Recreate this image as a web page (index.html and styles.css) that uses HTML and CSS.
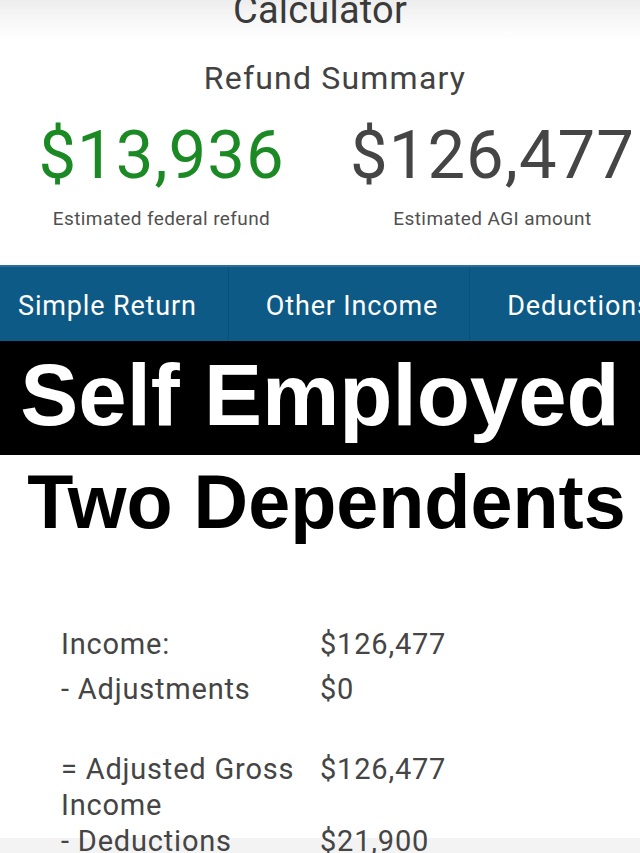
FILE: index.html
```html
<!DOCTYPE html>
<html lang="en">
<head>
<meta charset="utf-8">
<title>Refund Summary</title>
<link rel="stylesheet" href="styles.css">
</head>
<body>
<div class="page">
  <header class="summary">
    <h1 class="app-title">Calculator</h1>
    <h2 class="summary-title">Refund Summary</h2>
    <div class="figures">
      <div class="figure">
        <div class="amount amount-refund">$13,936</div>
        <div class="figure-label">Estimated federal refund</div>
      </div>
      <div class="figure">
        <div class="amount">$126,477</div>
        <div class="figure-label">Estimated AGI amount</div>
      </div>
    </div>
  </header>

  <nav class="tabs">
    <div class="tab tab-first">Simple Return</div>
    <div class="tab">Other Income</div>
    <div class="tab">Deductions</div>
  </nav>

  <div class="banner">Self Employed</div>
  <div class="subhead">Two Dependents</div>

  <section class="breakdown">
    <div class="row">
      <div class="row-label">Income:</div>
      <div class="row-value">$126,477</div>
    </div>
    <div class="row row-tight">
      <div class="row-label">- Adjustments</div>
      <div class="row-value">$0</div>
    </div>
    <div class="row row-section">
      <div class="row-label">= Adjusted Gross Income</div>
      <div class="row-value">$126,477</div>
    </div>
    <div class="row">
      <div class="row-label">- Deductions</div>
      <div class="row-value">$21,900</div>
    </div>
  </section>
</div>
</body>
</html>
```

FILE: styles.css
```css
html, body {
  margin: 0;
  padding: 0;
}

body {
  width: 640px;
  height: 853px;
  overflow: hidden;
  font-family: Roboto, "Noto Sans", "Liberation Sans", sans-serif;
  color: #454545;
  background:
    linear-gradient(to bottom, #ededed 0, #f8f8f8 22px, #ffffff 40px, #ffffff 838px, #f3f3f3 838px, #f3f3f3 853px);
}

.page {
  width: 640px;
  overflow: hidden;
}

.summary {
  text-align: center;
}

.app-title {
  margin: -10px 0 0;
  font-size: 38px;
  line-height: 40px;
  font-weight: 400;
  letter-spacing: 0.2px;
  color: #3a3a3a;
}

.summary-title {
  margin: 28px 0 0;
  padding-left: 30px;
  font-size: 32px;
  line-height: 40px;
  font-weight: 400;
  letter-spacing: 1.2px;
  color: #424242;
}

.figures {
  display: grid;
  grid-template-columns: 323px 339px;
  margin-top: 22px;
  width: 662px;
}

.figure {
  text-align: center;
}

.amount {
  font-size: 67px;
  line-height: 70px;
  letter-spacing: 1px;
  color: #454545;
  white-space: nowrap;
}

.amount-refund {
  color: #1b8a24;
}

.figure-label {
  margin-top: 18px;
  font-size: 19px;
  line-height: 22px;
  letter-spacing: 0.4px;
  color: #505050;
}

.tabs {
  display: flex;
  margin-top: 35px;
  height: 76px;
  background: #0d5a86;
  border-top: 2px solid #2a6f98;
  box-sizing: border-box;
  white-space: nowrap;
  color: #ffffff;
}

.tab {
  display: flex;
  align-items: center;
  flex: none;
  padding: 3px 31px 0 37px;
  font-size: 27px;
  letter-spacing: 0.85px;
  border-right: 1px solid #0a5079;
}

.tab-first {
  margin-left: -19px;
}

.banner {
  height: 114px;
  box-sizing: border-box;
  padding-bottom: 6px;
  background: #000000;
  color: #ffffff;
  text-align: center;
  font-family: "Liberation Sans", Arial, sans-serif;
  font-weight: 700;
  font-size: 87px;
  line-height: 108px;
  white-space: nowrap;
}

.subhead {
  margin-top: 7px;
  padding-left: 13px;
  text-align: center;
  color: #000000;
  font-family: "Liberation Sans", Arial, sans-serif;
  font-weight: 700;
  font-size: 75.5px;
  line-height: 80px;
  white-space: nowrap;
}

.breakdown {
  margin-top: 84px;
  padding-left: 61px;
  font-size: 29px;
  line-height: 36px;
  letter-spacing: 0.8px;
  color: #454545;
}

.row {
  display: grid;
  grid-template-columns: 249px auto;
  column-gap: 10px;
}

.row-tight {
  margin-top: 9px;
}

.row-section {
  margin-top: 44px;
}
```
